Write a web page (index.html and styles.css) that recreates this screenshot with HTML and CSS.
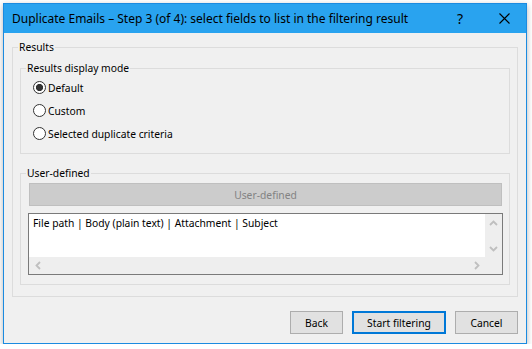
FILE: index.html
```html
<!DOCTYPE html>
<html lang="en">
<head>
  <meta charset="UTF-8">
  <title>Duplicate Emails – Step 3 (of 4)</title>
  <link rel="stylesheet" href="styles.css">
</head>
<body>
  <div class="window">
    <div class="titlebar">
      <span class="title">Duplicate Emails – Step 3 (of 4): select fields to list in the filtering result</span>
      <span class="help">?</span>
      <span class="close">
        <svg width="11" height="11" viewBox="0 0 11 11"><path d="M0.5 0.5 L10.5 10.5 M10.5 0.5 L0.5 10.5" stroke="#000" stroke-width="1.1" fill="none"/></svg>
      </span>
    </div>

    <div class="content">
      <fieldset class="group results">
        <legend>Results</legend>

        <fieldset class="group mode">
          <legend>Results display mode</legend>
          <div class="option"><span class="radio checked"></span>Default</div>
          <div class="option"><span class="radio"></span>Custom</div>
          <div class="option"><span class="radio"></span>Selected duplicate criteria</div>
        </fieldset>

        <fieldset class="group user">
          <legend>User-defined</legend>
          <button class="btn disabled" disabled>User-defined</button>
          <div class="listbox">
            <div class="list-text">File path | Body (plain text) | Attachment | Subject</div>
            <div class="vscroll">
              <span class="arrow"><svg width="9" height="6" viewBox="0 0 9 6"><path d="M1 5 L4.5 1.5 L8 5" /></svg></span>
              <span class="arrow"><svg width="9" height="6" viewBox="0 0 9 6"><path d="M1 1 L4.5 4.5 L8 1" /></svg></span>
            </div>
            <div class="hscroll">
              <span class="arrow"><svg width="6" height="9" viewBox="0 0 6 9"><path d="M5 1 L1.5 4.5 L5 8" /></svg></span>
              <span class="arrow"><svg width="6" height="9" viewBox="0 0 6 9"><path d="M1 1 L4.5 4.5 L1 8" /></svg></span>
            </div>
            <div class="corner"></div>
          </div>
        </fieldset>
      </fieldset>

      <div class="actions">
        <button class="btn back">Back</button>
        <button class="btn start">Start filtering</button>
        <button class="btn cancel">Cancel</button>
      </div>
    </div>
  </div>
</body>
</html>
```

FILE: styles.css
```css
body {
  margin: 0;
  background: #fff;
  font-family: "Noto Sans", "Open Sans", sans-serif;
  font-size: 10.3px;
  color: #000;
}

.window {
  box-sizing: border-box;
  width: 524px;
  height: 341px;
  margin: 3px 0 0 3px;
  border: 1px solid #1b8be0;
  background: #f0f0f0;
  box-shadow: 0 2px 6px rgba(0, 0, 0, 0.3);
  display: flex;
  flex-direction: column;
}

/* barra de titulo */
.titlebar {
  height: 29px;
  background: #29a3ef;
  display: flex;
  align-items: center;
  font-size: 12px;
}

.title {
  flex: 1;
  padding-left: 8px;
  white-space: nowrap;
  overflow: hidden;
}

.help {
  width: 46px;
  text-align: center;
  font-size: 14px;
}

.close {
  width: 43px;
  display: flex;
  justify-content: center;
}

.content {
  flex: 1;
  padding: 7px 8px 9px 8px;
  display: flex;
  flex-direction: column;
}

/* cajas de grupo */
.group {
  margin: 0;
  padding: 7px 7px 11px 7px;
  border: 1px solid #dcdcdc;
  min-width: 0;
}

.group legend {
  padding: 0 1px;
  margin-left: -2px;
  line-height: 14px;
  height: 14px;
}

.mode {
  padding: 1px 7px 8px 12px;
}

.mode legend {
  margin-left: -7px;
}

.user {
  margin-top: 12px;
  padding: 3px 6px 9px 7px;
  display: flex;
  flex-direction: column;
}

.option {
  height: 23px;
  display: flex;
  align-items: center;
}

.radio {
  box-sizing: border-box;
  width: 13px;
  height: 13px;
  border: 1px solid #333;
  border-radius: 50%;
  background: #fff;
  margin-right: 2px;
}

.radio.checked {
  background: radial-gradient(circle, #333 3.3px, #fff 3.9px);
}

/* botones */
.btn {
  box-sizing: border-box;
  height: 23px;
  padding: 0;
  font-family: inherit;
  font-size: 10.3px;
  color: #000;
  background: #e1e1e1;
  border: 1px solid #adadad;
}

.btn.disabled {
  margin: 0 1px;
  background: #cccccc;
  border-color: #bfbfbf;
  color: #838383;
}

/* lista con barras de desplazamiento */
.listbox {
  margin-top: 7px;
  height: 62px;
  box-sizing: border-box;
  border: 1px solid #7a7a7a;
  background: #fff;
  display: grid;
  grid-template-columns: 1fr 17px;
  grid-template-rows: 1fr 17px;
}

.list-text {
  padding: 2px 0 0 4px;
  white-space: nowrap;
}

.vscroll, .hscroll, .corner {
  background: #eeeeee;
}

.vscroll {
  display: flex;
  flex-direction: column;
  justify-content: space-between;
}

.hscroll {
  display: flex;
  justify-content: space-between;
}

.arrow {
  width: 17px;
  height: 17px;
  display: flex;
  align-items: center;
  justify-content: center;
}

.arrow path {
  fill: none;
  stroke: #bfbfbf;
  stroke-width: 1.8;
}

.actions {
  margin-top: 14px;
  display: flex;
  justify-content: flex-end;
  gap: 9px;
}

.back {
  width: 53px;
}

.start {
  width: 94px;
  border: 2px solid #0078d7;
}

.cancel {
  width: 63px;
}
```
